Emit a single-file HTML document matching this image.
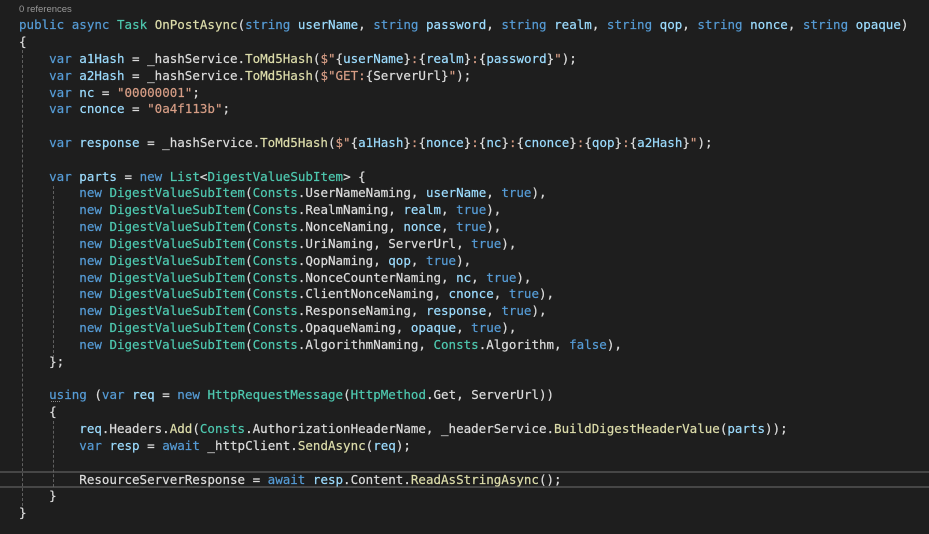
<!DOCTYPE html>
<html><head><meta charset="utf-8">
<style>
html,body{margin:0;padding:0;background:#1e1e1e;width:929px;height:534px;overflow:hidden}
#c{position:absolute;left:19px;top:17.2px;margin:0;font:12.52px/16.83px "DejaVu Sans Mono","Liberation Mono",monospace;color:#dcdcdc;white-space:pre;-webkit-text-stroke:0.2px}
.k{color:#569cd6}.t{color:#4ec9b0}.m{color:#dcdcaa}.s{color:#d69d85}.v{color:#9cdcfe}
.g{position:absolute;width:0;border-left:1px dashed #5f5f5f}
#l{position:absolute;left:0;top:471px;width:929px;border-top:2px solid #464646;border-bottom:2px solid #464646;box-sizing:content-box;height:13px}
#r{position:absolute;left:19px;top:4px;font:9.5px/12px "Liberation Sans",sans-serif;color:#999}
#d{position:absolute;left:51px;top:401px;width:9px;border-top:1px dotted #888}
</style></head><body>
<div id="l"></div>
<div class="g" style="left:22px;top:50px;height:456px"></div>
<div class="g" style="left:53px;top:186px;height:172px"></div>
<div class="g" style="left:53px;top:421px;height:66px"></div>
<div id="r">0 references</div>
<div id="d"></div>
<pre id="c"><span class="k">public</span> <span class="k">async</span> <span class="t">Task</span> <span class="m">OnPostAsync</span>(<span class="k">string</span> <span class="v">userName</span>, <span class="k">string</span> <span class="v">password</span>, <span class="k">string</span> <span class="v">realm</span>, <span class="k">string</span> <span class="v">qop</span>, <span class="k">string</span> <span class="v">nonce</span>, <span class="k">string</span> <span class="v">opaque</span>)
{
    <span class="k">var</span> <span class="v">a1Hash</span> = _hashService.<span class="m">ToMd5Hash</span>(<span class="s">$"</span>{<span class="v">userName</span>}<span class="s">:</span>{<span class="v">realm</span>}<span class="s">:</span>{<span class="v">password</span>}<span class="s">"</span>);
    <span class="k">var</span> <span class="v">a2Hash</span> = _hashService.<span class="m">ToMd5Hash</span>(<span class="s">$"GET:</span>{ServerUrl}<span class="s">"</span>);
    <span class="k">var</span> <span class="v">nc</span> = <span class="s">"00000001"</span>;
    <span class="k">var</span> <span class="v">cnonce</span> = <span class="s">"0a4f113b"</span>;

    <span class="k">var</span> <span class="v">response</span> = _hashService.<span class="m">ToMd5Hash</span>(<span class="s">$"</span>{<span class="v">a1Hash</span>}<span class="s">:</span>{<span class="v">nonce</span>}<span class="s">:</span>{<span class="v">nc</span>}<span class="s">:</span>{<span class="v">cnonce</span>}<span class="s">:</span>{<span class="v">qop</span>}<span class="s">:</span>{<span class="v">a2Hash</span>}<span class="s">"</span>);

    <span class="k">var</span> <span class="v">parts</span> = <span class="k">new</span> <span class="t">List</span>&lt;<span class="t">DigestValueSubItem</span>&gt; {
        <span class="k">new</span> <span class="t">DigestValueSubItem</span>(<span class="t">Consts</span>.UserNameNaming, <span class="v">userName</span>, <span class="k">true</span>),
        <span class="k">new</span> <span class="t">DigestValueSubItem</span>(<span class="t">Consts</span>.RealmNaming, <span class="v">realm</span>, <span class="k">true</span>),
        <span class="k">new</span> <span class="t">DigestValueSubItem</span>(<span class="t">Consts</span>.NonceNaming, <span class="v">nonce</span>, <span class="k">true</span>),
        <span class="k">new</span> <span class="t">DigestValueSubItem</span>(<span class="t">Consts</span>.UriNaming, ServerUrl, <span class="k">true</span>),
        <span class="k">new</span> <span class="t">DigestValueSubItem</span>(<span class="t">Consts</span>.QopNaming, <span class="v">qop</span>, <span class="k">true</span>),
        <span class="k">new</span> <span class="t">DigestValueSubItem</span>(<span class="t">Consts</span>.NonceCounterNaming, <span class="v">nc</span>, <span class="k">true</span>),
        <span class="k">new</span> <span class="t">DigestValueSubItem</span>(<span class="t">Consts</span>.ClientNonceNaming, <span class="v">cnonce</span>, <span class="k">true</span>),
        <span class="k">new</span> <span class="t">DigestValueSubItem</span>(<span class="t">Consts</span>.ResponseNaming, <span class="v">response</span>, <span class="k">true</span>),
        <span class="k">new</span> <span class="t">DigestValueSubItem</span>(<span class="t">Consts</span>.OpaqueNaming, <span class="v">opaque</span>, <span class="k">true</span>),
        <span class="k">new</span> <span class="t">DigestValueSubItem</span>(<span class="t">Consts</span>.AlgorithmNaming, <span class="t">Consts</span>.Algorithm, <span class="k">false</span>),
    };

    <span class="k">using</span> (<span class="k">var</span> <span class="v">req</span> = <span class="k">new</span> <span class="t">HttpRequestMessage</span>(<span class="t">HttpMethod</span>.Get, ServerUrl))
    {
        <span class="v">req</span>.Headers.<span class="m">Add</span>(<span class="t">Consts</span>.AuthorizationHeaderName, _headerService.<span class="m">BuildDigestHeaderValue</span>(<span class="v">parts</span>));
        <span class="k">var</span> <span class="v">resp</span> = <span class="k">await</span> _httpClient.<span class="m">SendAsync</span>(<span class="v">req</span>);

        ResourceServerResponse = <span class="k">await</span> <span class="v">resp</span>.Content.<span class="m">ReadAsStringAsync</span>();
    }
}</pre>
</body></html>
